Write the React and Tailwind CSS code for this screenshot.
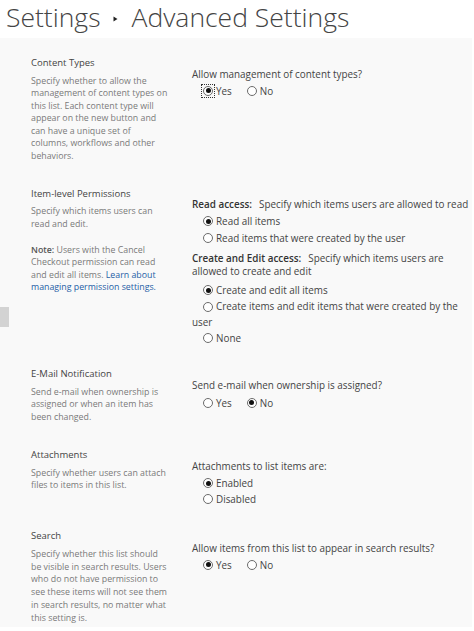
import React from "react";

function Radio({ checked = false }) {
  return (
    <span className="inline-flex items-center justify-center w-[10px] h-[10px] rounded-full border border-[#6b6b6b] bg-white shrink-0">
      {checked && <span className="block w-[5px] h-[5px] rounded-full bg-[#111]" />}
    </span>
  );
}

function Option({ checked, children, first }) {
  return (
    <span className={first ? "flex items-center" : "flex items-center ml-[15px]"}>
      <Radio checked={checked} />
      <span className="ml-[3px]">{children}</span>
    </span>
  );
}

function Row({ h, className = "", children }) {
  return <div className={"flex items-center pl-[11px] " + h + " " + className}>{children}</div>;
}

function Heading({ children }) {
  return <div className="text-[9.5px] leading-[16px] text-[#444]">{children}</div>;
}

function Desc({ children, className = "" }) {
  return (
    <div className={"text-[8.8px] leading-[12.5px] text-[#7a7a7a] whitespace-nowrap mt-[3.75px] " + className}>
      {children}
    </div>
  );
}

export default function App() {
  return (
    <div
      className="w-[474px] h-[631px] bg-white overflow-hidden"
      style={{ fontFamily: '"Open Sans", "Noto Sans", sans-serif' }}
    >
      <div className="h-[38px] pl-[6px] flex items-start">
        <div className="flex items-center text-[26.5px] leading-[34px] font-light text-[#444] whitespace-nowrap">
          <span>Settings</span>
          <svg width="5" height="6" viewBox="0 0 5 6" className="mx-[13px] mt-[3px]">
            <path d="M0.5 0.5 L4.5 3 L0.5 5.5 Z" fill="#222" />
          </svg>
          <span>Advanced Settings</span>
        </div>
      </div>

      <div className="relative w-[472px] h-[589px] bg-[#f9f9f9] pt-[17px] pl-[31px] text-[9.9px] text-[#444]">
        <div className="absolute left-0 top-[269px] w-[9px] h-[20px] bg-[#d3d3d3]" />

        {/* Content Types */}
        <div className="flex h-[130.5px]">
          <div className="w-[161px] shrink-0">
            <Heading>Content Types</Heading>
            <Desc>
              Specify whether to allow the
              <br />
              management of content types on
              <br />
              this list. Each content type will
              <br />
              appear on the new button and
              <br />
              can have a unique set of
              <br />
              columns, workflows and other
              <br />
              behaviors.
            </Desc>
          </div>
          <div className="pt-[10.5px]">
            <div className="leading-[16px]">Allow management of content types?</div>
            <div className="h-[16px] mt-[1.5px] pl-[9px] flex items-center">
              <span className="flex items-center">
                <span className="inline-flex p-[1px] border border-dotted border-[#333]">
                  <Radio checked />
                </span>
                <span className="ml-[1px]">Yes</span>
              </span>
              <Option>No</Option>
            </div>
          </div>
        </div>

        {/* Item-level Permissions */}
        <div className="flex h-[180.5px]">
          <div className="w-[161px] shrink-0">
            <Heading>Item-level Permissions</Heading>
            <Desc>
              Specify which items users can
              <br />
              read and edit.
            </Desc>
            <Desc className="mt-[13.5px]">
              <span className="font-semibold text-[#555]">Note:</span> Users with the Cancel
              <br />
              Checkout permission can read
              <br />
              and edit all items. <span className="text-[#1f5ea6]">Learn about</span>
              <br />
              <span className="text-[#1f5ea6]">managing permission settings.</span>
            </Desc>
          </div>
          <div className="pt-[10px] whitespace-nowrap">
            <div className="leading-[16px]">
              <span className="font-semibold text-[#333]">Read access:</span>
              <span className="ml-[7px]">Specify which items users are allowed to read</span>
            </div>
            <div className="mt-[1.5px]">
              <Row h="h-[17px]">
                <Option checked first>Read all items</Option>
              </Row>
              <Row h="h-[17px]">
                <Option first>Read items that were created by the user</Option>
              </Row>
            </div>
            <div className="mt-[4.5px] leading-[13px]">
              <span className="font-semibold text-[#333]">Create and Edit access:</span>
              <span className="ml-[7px]">Specify which items users are</span>
              <br />
              allowed to create and edit
            </div>
            <div className="mt-[4.5px]">
              <Row h="h-[16.5px]">
                <Option checked first>Create and edit all items</Option>
              </Row>
              <Row h="h-[16.5px]">
                <Option first>Create items and edit items that were created by the</Option>
              </Row>
              <div className="h-[15px] leading-[15px]">user</div>
              <Row h="h-[16px]">
                <Option first>None</Option>
              </Row>
            </div>
          </div>
        </div>

        {/* E-Mail Notification */}
        <div className="flex h-[81px]">
          <div className="w-[161px] shrink-0">
            <Heading>E-Mail Notification</Heading>
            <Desc>
              Send e-mail when ownership is
              <br />
              assigned or when an item has
              <br />
              been changed.
            </Desc>
          </div>
          <div className="pt-[10.5px]">
            <div className="leading-[16px]">Send e-mail when ownership is assigned?</div>
            <Row h="h-[16px]" className="mt-[2.5px]">
              <Option first>Yes</Option>
              <Option checked>No</Option>
            </Row>
          </div>
        </div>

        {/* Attachments */}
        <div className="flex h-[81px]">
          <div className="w-[161px] shrink-0">
            <Heading>Attachments</Heading>
            <Desc>
              Specify whether users can attach
              <br />
              files to items in this list.
            </Desc>
          </div>
          <div className="pt-[10.5px]">
            <div className="leading-[16px]">Attachments to list items are:</div>
            <div className="mt-[2px]">
              <Row h="h-[16px]">
                <Option checked first>Enabled</Option>
              </Row>
              <Row h="h-[16px]">
                <Option first>Disabled</Option>
              </Row>
            </div>
          </div>
        </div>

        {/* Search */}
        <div className="flex">
          <div className="w-[161px] shrink-0">
            <Heading>Search</Heading>
            <Desc className="leading-[12.75px]">
              Specify whether this list should
              <br />
              be visible in search results. Users
              <br />
              who do not have permission to
              <br />
              see these items will not see them
              <br />
              in search results, no matter what
              <br />
              this setting is.
            </Desc>
          </div>
          <div className="pt-[12px]">
            <div className="leading-[16px]">Allow items from this list to appear in search results?</div>
            <Row h="h-[16px]" className="mt-[1px]">
              <Option checked first>Yes</Option>
              <Option>No</Option>
            </Row>
          </div>
        </div>
      </div>
    </div>
  );
}
